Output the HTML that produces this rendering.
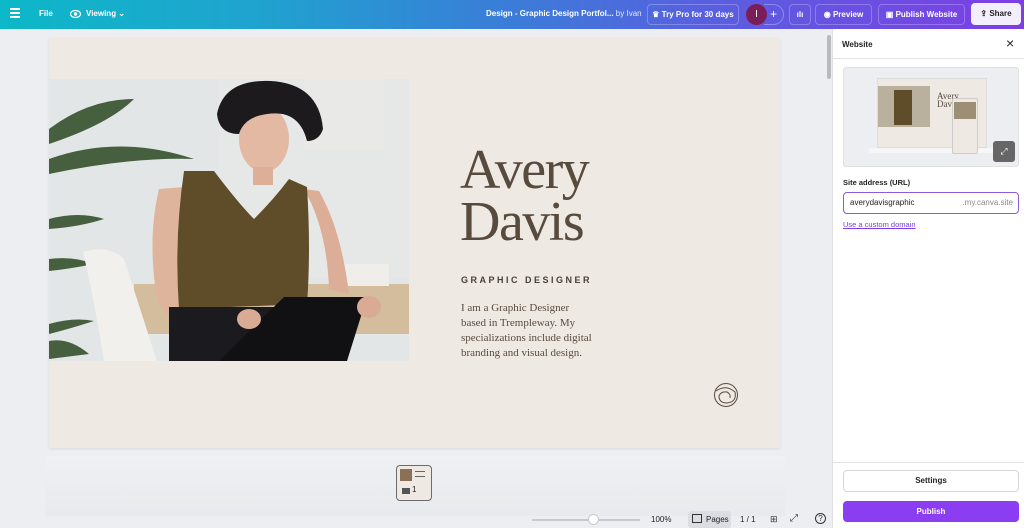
<!DOCTYPE html>
<html><head><meta charset="utf-8"><style>
*{box-sizing:border-box;margin:0;padding:0}
body{width:1024px;height:528px;overflow:hidden;font-family:"Liberation Sans",sans-serif;background:#edeef2;position:relative}
.top{position:absolute;left:0;top:0;width:1024px;height:29px;background:linear-gradient(90deg,#0db8c8 0%,#1fa3cf 25%,#3b7cd8 50%,#5a5ee0 70%,#7d3ee5 100%);color:#fff;font-size:8px;font-weight:bold}
.top span,.top div{position:absolute}
.btn{border:1px solid rgba(255,255,255,.25);border-radius:4px;height:21px;top:4px;line-height:19px;text-align:center}
.card{position:absolute;left:49px;top:38px;width:731px;height:410px;background:#efe9e3;box-shadow:0 1px 3px rgba(0,0,0,.08)}
.panel{position:absolute;left:832px;top:29px;width:192px;height:499px;background:#fff;border-left:1px solid #e0e0e4}
.serif{font-family:"Liberation Serif",serif}
</style></head><body>
<div class="top">
 <span style="left:10px;top:8px;width:10px;height:1.5px;background:#fff;box-shadow:0 4px 0 #fff,0 8px 0 #fff"></span>
 <span style="left:39px;top:9px">File</span>
 <svg style="position:absolute;left:70px;top:9px" width="11" height="10" viewBox="0 0 11 10"><ellipse cx="5.5" cy="5" rx="5" ry="3.5" fill="none" stroke="#fff" stroke-width="1.2"/><circle cx="5.5" cy="5" r="1.7" fill="#fff"/></svg>
 <span style="left:86px;top:9px">Viewing ⌄</span>
 <span style="left:486px;top:9px">Design - Graphic Design Portfol... <span style="position:static;font-weight:normal;opacity:.85">by Ivan</span></span>
 <div class="btn" style="left:647px;width:92px">♛ Try Pro for 30 days</div>
 <div style="left:746px;top:4px;width:21px;height:21px;border-radius:50%;background:#7a1e59;text-align:center;line-height:21px;font-size:10px;font-weight:normal">I</div>
 <div style="left:764px;top:4px;width:20px;height:21px;border:1px solid rgba(255,255,255,.3);border-left:none;border-radius:0 11px 11px 0;text-align:center;line-height:19px;font-size:12px;font-weight:normal">+</div>
 <div class="btn" style="left:789px;width:22px">ılı</div>
 <div class="btn" style="left:815px;width:57px">◉ Preview</div>
 <div class="btn" style="left:878px;width:87px">▣ Publish Website</div>
 <div style="left:971px;top:3px;width:50px;height:22px;border-radius:4px;background:#f3eefb;color:#222;text-align:center;line-height:22px">⇪ Share</div>
</div>
<div style="position:absolute;left:827px;top:35px;width:4px;height:44px;background:#b8bac0;border-radius:2px"></div>
<div class="card">
 <svg style="position:absolute;left:0;top:41px" width="360" height="282" viewBox="0 0 360 282">
  <rect width="360" height="282" fill="#e2e6e6"/>
  <rect x="170" y="0" width="190" height="200" fill="#e6e8e8"/>
  <rect x="255" y="0" width="80" height="70" fill="#e9e9e8"/>
  <rect x="85" y="205" width="275" height="50" fill="#d4bd9c"/>
  <rect x="280" y="185" width="60" height="22" fill="#efeeeb"/>
  <path d="M0 50 Q40 20 85 20 Q60 45 0 65Z M0 80 Q70 55 145 80 Q80 78 0 95Z M0 140 Q30 132 55 140 Q30 148 0 150Z M0 180 Q25 177 45 185 Q20 190 0 192Z M0 245 Q25 238 45 242 Q20 250 0 255Z M0 262 Q20 258 40 275 L0 280Z" fill="#46603f"/>
  <path d="M34 173 Q60 165 75 180 L108 282 L55 282 Q45 220 34 173Z" fill="#f1f0ec"/>
  <ellipse cx="215" cy="60" rx="25" ry="33" fill="#e3b9a4"/>
  <path d="M168 35 Q175 0 222 2 Q270 5 274 50 Q270 62 258 62 Q250 30 218 35 Q195 38 190 55 Q170 55 168 35Z" fill="#1c1a1c"/>
  <rect x="204" y="88" width="20" height="18" fill="#ddae98"/>
  <path d="M110 110 Q98 160 108 220 Q120 250 170 258 L180 235 Q140 230 135 200 Q132 150 135 108Z" fill="#dfb49d"/>
  <path d="M255 110 Q278 150 280 210 L300 215 Q292 150 270 112Z" fill="#dcae97"/>
  <path d="M135 92 L165 92 Q190 125 205 140 Q225 120 240 100 L258 108 Q262 170 258 225 L130 230 Q125 160 135 92Z" fill="#5f4d2a"/>
  <rect x="120" y="228" width="140" height="54" fill="#1b1b1f"/>
  <path d="M170 282 L235 218 L318 218 L298 282Z" fill="#111114"/>
  <ellipse cx="320" cy="228" rx="12" ry="11" fill="#d9ab94"/>
  <ellipse cx="200" cy="240" rx="12" ry="10" fill="#d9ab94"/>
 </svg>
 <div class="serif" style="position:absolute;left:411px;top:106px;font-size:56px;line-height:52px;color:#574b3d;letter-spacing:-1.5px">Avery<br>Davis</div>
 <div style="position:absolute;left:412px;top:237px;font-size:9px;font-weight:bold;letter-spacing:2.5px;color:#4a4038">GRAPHIC DESIGNER</div>
 <div class="serif" style="position:absolute;left:412px;top:263px;font-size:11px;line-height:15px;color:#574b3d;white-space:nowrap">I am a Graphic Designer<br>based in Trempleway. My<br>specializations include digital<br>branding and visual design.</div>
 <svg style="position:absolute;left:664px;top:344px" width="26" height="26" viewBox="0 0 26 26" fill="none" stroke="#574b3d" stroke-width="1"><circle cx="13" cy="13" r="11.5"/><path d="M3 9 Q13 2 22 10 Q24 20 14 21 Q6 21 6 14 Q8 9 14 10 Q18 12 17 16"/></svg>
</div>
<div style="position:absolute;left:45px;top:456px;width:740px;height:60px;background:linear-gradient(#eef0f2,#e9eaed)"></div>
<div style="position:absolute;left:396px;top:465px;width:36px;height:36px;border:1px solid #6b6b70;border-radius:4px;background:#efe9e3;overflow:hidden">
 <div style="position:absolute;left:3px;top:3px;width:12px;height:12px;background:#8a7054"></div>
 <div style="position:absolute;left:18px;top:5px;width:10px;height:6px;border-top:1px solid #666;border-bottom:1px solid #666"></div>
 <div style="position:absolute;left:5px;top:22px;width:8px;height:6px;background:#555"></div>
 <div style="position:absolute;left:15px;top:19px;font-size:8px;color:#222">1</div>
</div>
<div style="position:absolute;left:532px;top:519px;width:108px;height:1.5px;background:#c8c9cd"></div>
<div style="position:absolute;left:588px;top:514px;width:11px;height:11px;border-radius:50%;background:#fff;border:1px solid #c8c9cd"></div>
<div style="position:absolute;left:651px;top:515px;font-size:8px;color:#222">100%</div>
<div style="position:absolute;left:688px;top:511px;width:43px;height:17px;background:#dcdde2;border-radius:3px;font-size:8px;color:#222;line-height:17px;padding-left:18px">Pages</div>
<div style="position:absolute;left:692px;top:514px;width:10px;height:9px;border:1.2px solid #333"></div>
<div style="position:absolute;left:740px;top:515px;font-size:8px;color:#222">1 / 1</div>
<div style="position:absolute;left:770px;top:514px;font-size:9px;color:#333">⊞</div>
<div style="position:absolute;left:790px;top:513px;font-size:10px;color:#333">⤢</div>
<div style="position:absolute;left:815px;top:513px;width:11px;height:11px;border:1.2px solid #333;border-radius:50%;font-size:8px;text-align:center;line-height:9px;color:#333">?</div>
<div class="panel">
 <div style="position:absolute;left:9px;top:11px;font-size:8px;font-weight:bold;color:#222">Website</div>
 <div style="position:absolute;left:173px;top:6px;font-size:14px;color:#222">×</div>
 <div style="position:absolute;left:0;top:29px;width:192px;height:1px;background:#e2e2e6"></div>
 <div style="position:absolute;left:10px;top:38px;width:176px;height:100px;background:#edeef1;border:1px solid #e0e0e4;border-radius:3px">
  <div style="position:absolute;left:33px;top:10px;width:110px;height:70px;background:#efe9e3;border:1px solid #ddd"></div>
  <div style="position:absolute;left:25px;top:80px;width:126px;height:5px;background:#f6f6f6;border-radius:2px"></div>
  <div style="position:absolute;left:34px;top:18px;width:52px;height:41px;background:#b9b19d"></div>
  <div style="position:absolute;left:50px;top:22px;width:18px;height:35px;background:#5f4d2a"></div>
  <div class="serif" style="position:absolute;left:93px;top:24px;font-size:9px;line-height:8px;color:#574b3d">Avery<br>Davis</div>
  <div style="position:absolute;left:108px;top:30px;width:26px;height:56px;background:#efe9e3;border:1px solid #ccc;border-radius:2px"></div>
  <div style="position:absolute;left:110px;top:34px;width:22px;height:17px;background:#9d8e76"></div>
  <div style="position:absolute;left:149px;top:73px;width:22px;height:21px;background:#666;border-radius:3px;color:#fff;font-size:9px;text-align:center;line-height:21px">⤢</div>
 </div>
 <div style="position:absolute;left:10px;top:149px;font-size:7.5px;font-weight:bold;color:#222">Site address (URL)</div>
 <div style="position:absolute;left:10px;top:163px;width:176px;height:22px;border:1px solid #8d5ad8;border-radius:4px;font-size:8px;line-height:20px;padding-left:6px;color:#222">averydavisgraphic<span style="position:absolute;right:5px;color:#888">.my.canva.site</span></div>
 <div style="position:absolute;left:10px;top:191px;font-size:7.5px;color:#7d3ee5;text-decoration:underline">Use a custom domain</div>
 <div style="position:absolute;left:0;top:433px;width:192px;height:1px;background:#e2e2e6"></div>
 <div style="position:absolute;left:10px;top:441px;width:176px;height:22px;border:1px solid #d6d6da;border-radius:4px;text-align:center;line-height:20px;font-size:8px;font-weight:bold;color:#222">Settings</div>
 <div style="position:absolute;left:10px;top:472px;width:176px;height:21px;background:#8b3df2;border-radius:4px;text-align:center;line-height:21px;font-size:8px;font-weight:bold;color:#fff">Publish</div>
</div>
</body></html>
